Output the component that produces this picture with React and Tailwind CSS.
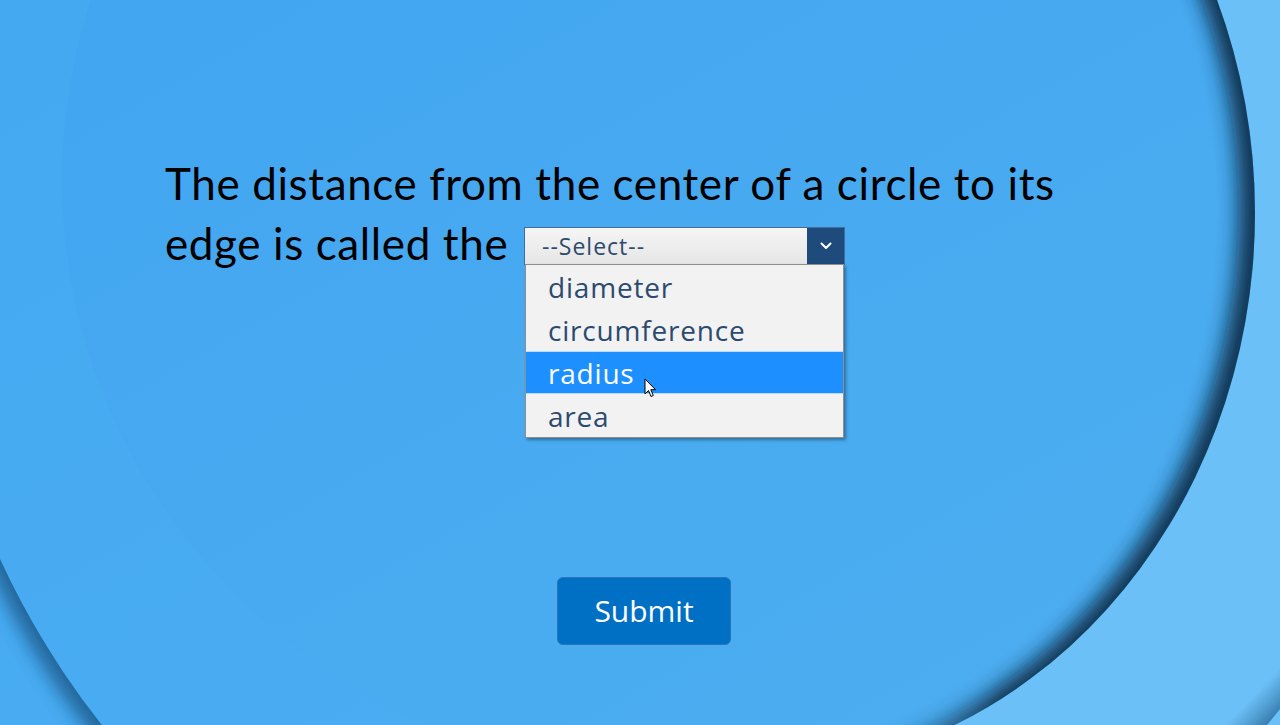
import React from "react";

const ELL = "M245,213 a505,560 0 1,0 1010,0 a505,560 0 1,0 -1010,0 Z";
const BIG = "M-300,-300 H1600 V1100 H-300 Z ";
const CIRC_C = "M-76,213 a826,826 0 1,0 1652,0 a826,826 0 1,0 -1652,0 Z";
const FAINT = "M62,180 a628,600 0 1,0 1256,0 a628,600 0 1,0 -1256,0 Z";

function Background() {
  return (
    <svg className="absolute inset-0" width="1280" height="725" viewBox="0 0 1280 725">
      <defs>
        <linearGradient id="bgGrad" x1="0" y1="0" x2="1" y2="1">
          <stop offset="0" stopColor="#41a5f1" />
          <stop offset="0.6" stopColor="#49abf0" />
          <stop offset="1" stopColor="#4daef0" />
        </linearGradient>
        <linearGradient id="fadeX" gradientUnits="userSpaceOnUse" x1="860" y1="0" x2="1000" y2="0">
          <stop offset="0" stopColor="#000000" />
          <stop offset="1" stopColor="#ffffff" />
        </linearGradient>
        <linearGradient id="bandGrad" gradientUnits="userSpaceOnUse" x1="1249" y1="700" x2="1270" y2="720">
          <stop offset="0" stopColor="#6cc0f8" />
          <stop offset="0.5" stopColor="#55a2d6" />
          <stop offset="1" stopColor="#3a80b4" />
        </linearGradient>
        <mask id="rightMask" maskUnits="userSpaceOnUse" x="0" y="0" width="1280" height="725">
          <rect x="0" y="0" width="1280" height="725" fill="url(#fadeX)" />
        </mask>
        <clipPath id="mainClip">
          <path d={ELL} />
        </clipPath>
        <clipPath id="rightHalf">
          <rect x="750" y="-10" width="600" height="800" />
        </clipPath>
        <clipPath id="outC">
          <path clipRule="evenodd" d={BIG + CIRC_C} />
        </clipPath>
        <filter id="blurA" x="-50%" y="-50%" width="200%" height="200%">
          <feGaussianBlur stdDeviation="10" />
        </filter>
        <filter id="blurB" x="-50%" y="-50%" width="200%" height="200%">
          <feGaussianBlur stdDeviation="9" />
        </filter>
      </defs>

      <rect x="0" y="0" width="1280" height="725" fill="url(#bgGrad)" />
      <path d={BIG + FAINT} fillRule="evenodd" fill="#4caff5" opacity="0.4" />

      <g clipPath="url(#rightHalf)">
        <path d={BIG + ELL} fillRule="evenodd" fill="#6cc0f8" />
      </g>

      {/* outer ring band at the bottom-right corner */}
      <path d="M1280,667 A697,697 0 0,1 1224,725 L1267,725 A727,727 0 0,0 1280,709 Z" fill="url(#bandGrad)" />

      <g mask="url(#rightMask)">
        <g clipPath="url(#mainClip)">
          <path d={BIG + ELL} fillRule="evenodd" fill="#0f2f48" filter="url(#blurA)" transform="translate(-16,-3)" opacity="0.95" />
        </g>
      </g>

      <g clipPath="url(#outC)">
        <path d={CIRC_C} fill="#16507e" filter="url(#blurB)" transform="translate(-10,10)" opacity="0.75" />
      </g>
    </svg>
  );
}

function Chevron() {
  return (
    <svg width="12" height="8" viewBox="0 0 12 8">
      <path d="M1.5 1.5 L6 6 L10.5 1.5" fill="none" stroke="#ffffff" strokeWidth="2" strokeLinecap="round" strokeLinejoin="round" />
    </svg>
  );
}

function Pointer() {
  return (
    <svg className="absolute left-[118px] top-[113px]" width="13" height="20" viewBox="0 0 13 20">
      <path d="M1 1 L1 16 L4.5 12.5 L7 18.5 L9.3 17.5 L6.8 11.7 L11.5 11.7 Z" fill="#ffffff" stroke="#000000" strokeWidth="1" strokeLinejoin="round" />
    </svg>
  );
}

export default function App() {
  const items = ["diameter", "circumference", "radius", "area"];
  return (
    <div className="relative w-[1280px] h-[725px] overflow-hidden font-['Lato',sans-serif]">
      <Background />
      <div className="relative flex flex-col pl-[165px] pt-[153px]">
        <p className="text-[44px] leading-[60px] tracking-[0.62px] text-black whitespace-nowrap">
          The distance from the center of a circle to its
        </p>
        <div className="flex items-start h-[60px]">
          <span className="w-[359px] shrink-0 text-[44px] leading-[60px] tracking-[0.62px] text-black whitespace-nowrap">
            edge is called the
          </span>
          <div className="relative mt-[14px] w-[321px] h-[38px] border border-[#3f6d9e] bg-gradient-to-b from-[#f5f5f5] to-[#e6e6e6] flex items-center font-['Open_Sans',sans-serif]">
            <span className="flex-1 pl-[17px] text-[23px] tracking-[1px] leading-none text-[#2e4a6c]">--Select--</span>
            <div className="w-[37px] h-full bg-[#1f4a7c] flex items-center justify-center">
              <Chevron />
            </div>
            <div className="absolute left-0 top-[36px] w-[319px] border border-[#8e8e8e] bg-[#f2f2f2] shadow-[2px_2px_3px_rgba(0,0,0,0.35)] flex flex-col">
              {items.map((it) => (
                <div
                  key={it}
                  className={
                    it === "radius"
                      ? "h-[43px] flex items-center pl-[22px] text-[28px] tracking-[0.8px] leading-none text-white bg-[#1e8fff] border-y border-[#b9dcfb]"
                      : "h-[43px] flex items-center pl-[22px] text-[28px] tracking-[0.8px] leading-none text-[#2c4a6f]"
                  }
                >
                  {it}
                </div>
              ))}
              <Pointer />
            </div>
          </div>
        </div>
        <button className="relative ml-[392px] mt-[304px] w-[174px] h-[68px] rounded-[6px] bg-[#0070c4] border border-[#2a74b8] text-white text-[30px] leading-none flex items-center justify-center font-['Open_Sans',sans-serif]">
          Submit
        </button>
      </div>
    </div>
  );
}
